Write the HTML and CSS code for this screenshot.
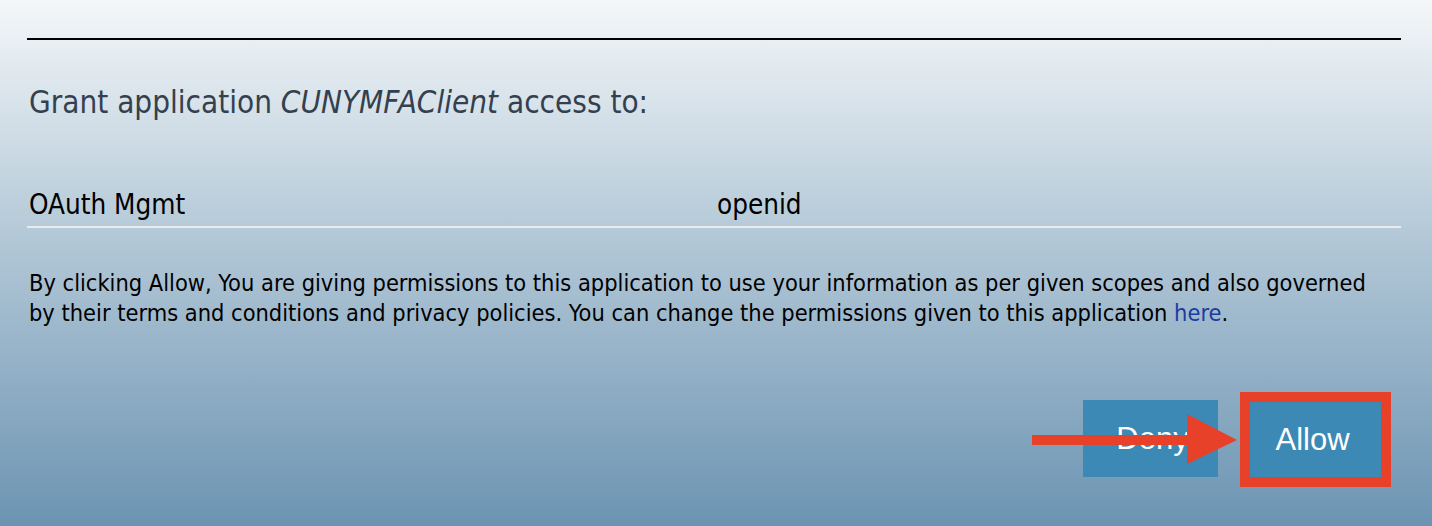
FILE: index.html
```html
<!DOCTYPE html>
<html lang="en">
<head>
<meta charset="utf-8">
<title>Grant access</title>
<link rel="stylesheet" href="styles.css">
</head>
<body>
<div class="page">
  <hr class="rule">
  <h1 class="title">Grant application <em>CUNYMFAClient</em> access to:</h1>
  <div class="scope-row">
    <div class="scope-cell">OAuth Mgmt</div>
    <div class="scope-cell scope-value">openid</div>
  </div>
  <p class="notice">By clicking Allow, You are giving permissions to this application to use your information as per given scopes and also governed by their terms and conditions and privacy policies. You can change the permissions given to this application <a class="link" href="#">here</a>.</p>
  <div class="actions">
    <button class="btn btn-deny" type="button">Deny</button>
    <button class="btn btn-allow" type="button">Allow</button>
    <svg class="arrow" width="205" height="50" viewBox="0 0 205 50" aria-hidden="true">
      <rect x="0" y="21" width="158" height="10" fill="#e8412a"/>
      <polygon points="155,0 205,26 155,50" fill="#e8412a"/>
    </svg>
  </div>
</div>
</body>
</html>
```
FILE: styles.css
```css
html, body {
  margin: 0;
  padding: 0;
}
body {
  min-height: 526px;
  background: linear-gradient(to bottom, #f4f7f9 0%, #b3c8d7 45%, #6c94b2 100%);
  font-family: "DejaVu Sans Condensed", "DejaVu Sans", sans-serif;
  font-stretch: condensed;
  overflow: hidden;
}
.page {
  padding: 38px 31px 0 27px;
}
.rule {
  margin: 0;
  border: 0;
  height: 2px;
  background: #000;
}
.title {
  margin: 43px 0 0 2px;
  font-size: 31.2px;
  line-height: 38px;
  font-weight: normal;
  color: #343f4f;
}
.title em {
  font-style: italic;
}
.scope-row {
  margin-top: 67px;
  display: grid;
  grid-template-columns: 1fr 1fr;
  padding: 0 0 4px 2px;
  border-bottom: 2px solid #e9ecef;
  font-size: 27.6px;
  line-height: 34px;
  color: #000;
}
.scope-value {
  padding-left: 2px;
}
.notice {
  margin: 40px 18px 0 2px;
  font-size: 23.4px;
  line-height: 30px;
  color: #000;
}
.link {
  color: #1b3c9e;
  text-decoration: none;
}
.actions {
  position: relative;
  margin-top: 72px;
  display: flex;
  justify-content: flex-end;
  align-items: flex-end;
  gap: 32px;
  padding-right: 20px;
}
.btn {
  border: 0;
  margin: 0;
  padding: 0 0 0 4px;
  background: #3d89b6;
  color: #fff;
  font-family: "Liberation Sans", Arial, sans-serif;
  font-size: 31px;
  cursor: pointer;
}
.btn-allow {
  padding: 0 6px 0 0;
}
.btn-deny {
  width: 135px;
  height: 77px;
}
.btn-allow {
  width: 131px;
  height: 75px;
  outline: 10px solid #e8412a;
}
.arrow {
  position: absolute;
  right: 164px;
  top: 14px;
}
```
